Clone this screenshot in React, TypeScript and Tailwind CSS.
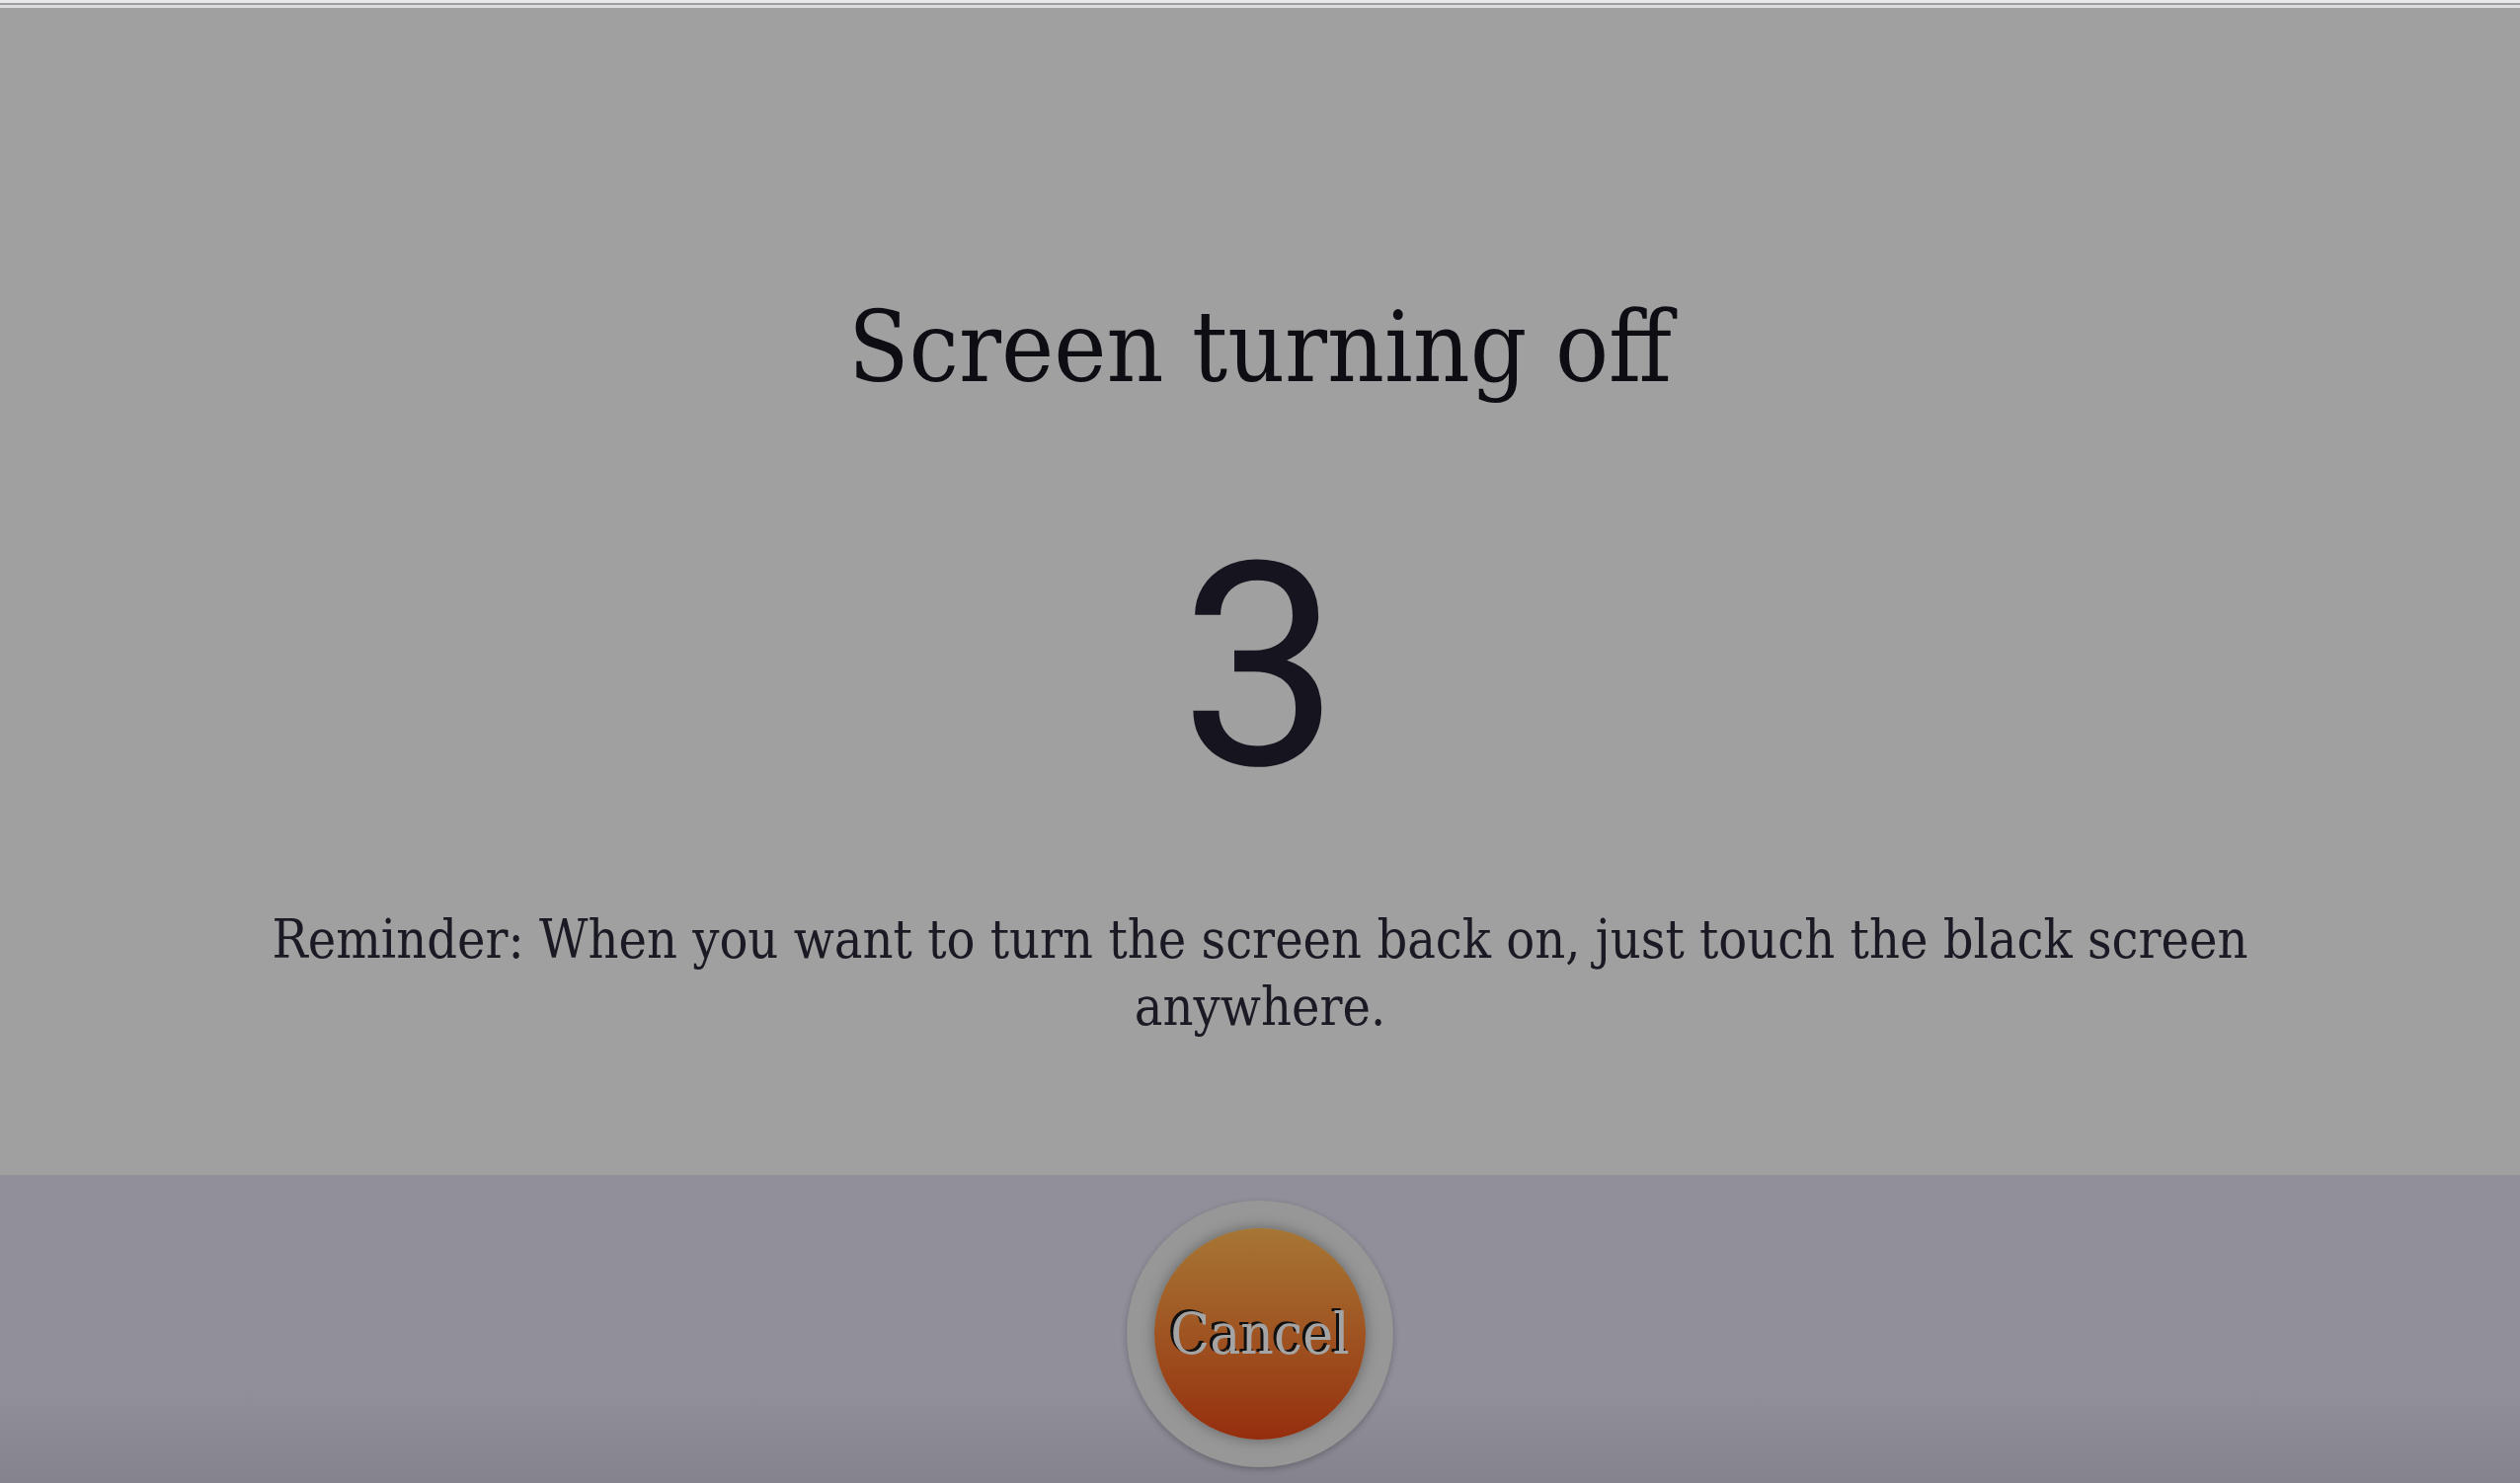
const slab = { fontFamily: '"DejaVu Serif", "Liberation Serif", serif' };

const ScreenOffCountdown: React.FC = () => {
	const seconds = 3;

	return (
		<div className="flex h-[1502px] w-full flex-col overflow-hidden bg-[#a0a0a0]">
			{/* window chrome strip */}
			<div className="h-[3px] bg-[#e9e9ec]" />
			<div className="h-[2px] bg-[#9c9ca1]" />
			<div className="h-[3px] bg-[#dcdcde]" />

			<div className="flex flex-1 flex-col items-center text-center">
				<h1 className="mt-[294px] font-stretch-condensed text-[100px] leading-none text-[#0e0d13]" style={slab}>
					Screen turning off
				</h1>
				<div
					className="mt-[130px] text-[288px] leading-none text-[#15141f]"
					style={{ fontFamily: "Roboto, sans-serif" }}
				>
					{seconds}
				</div>
				<p className="mt-[98px] max-w-[2040px] font-stretch-condensed text-[53.5px] leading-[68px] text-[#1a1924]" style={slab}>
					Reminder: When you want to turn the screen back on, just touch the black screen anywhere.
				</p>
			</div>

			<div className="flex h-[312px] items-center justify-center bg-gradient-to-b from-[#918f9a] from-70% to-[#85838e] pt-[10px]">
				<div className="flex h-[270px] w-[270px] items-center justify-center rounded-full bg-[#979797] shadow-[0_2px_6px_rgba(0,0,0,0.25)]">
					<button
						className="flex h-[214px] w-[214px] items-center justify-center rounded-full bg-gradient-to-b from-[#a67634] to-[#952d0d] font-stretch-condensed text-[58px] text-[#a4a4a4] shadow-[0_0_14px_rgba(0,0,0,0.35)] [text-shadow:-3px_-2px_0_#111]"
						style={slab}
					>
						Cancel
					</button>
				</div>
			</div>
		</div>
	);
};

export default function App() {
	return <ScreenOffCountdown />;
}
